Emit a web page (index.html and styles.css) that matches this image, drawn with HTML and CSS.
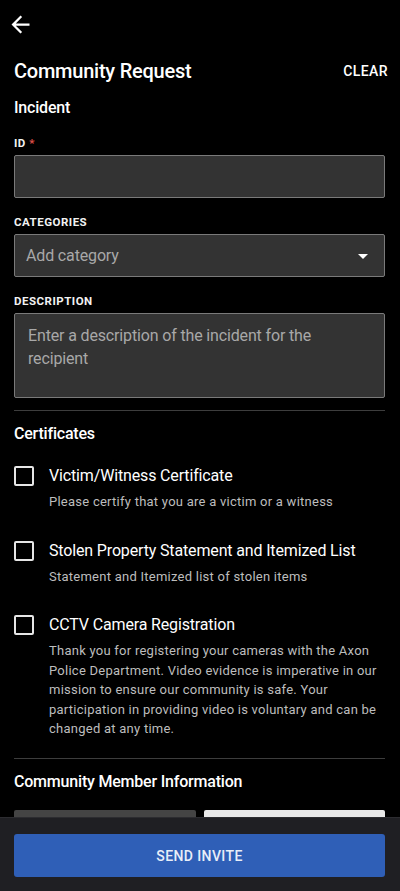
FILE: index.html
```html
<!DOCTYPE html>
<html lang="en">
<head>
<meta charset="utf-8">
<title>Community Request</title>
<link rel="stylesheet" href="styles.css">
</head>
<body>
<div class="page">
  <header class="topbar">
    <button class="back" aria-label="Back">
      <svg viewBox="0 0 24 24" width="27" height="27"><path fill="#fff" d="M20 11H7.83l5.59-5.59L12 4l-8 8 8 8 1.41-1.41L7.83 13H20v-2z"/></svg>
    </button>
  </header>

  <main class="content">
    <div class="title-row">
      <h1 class="title">Community Request</h1>
      <button class="clear">CLEAR</button>
    </div>

    <h2 class="section">Incident</h2>

    <div class="field">
      <label class="label">ID <span class="req">*</span></label>
      <div class="input"></div>
    </div>

    <div class="field">
      <label class="label">CATEGORIES</label>
      <div class="input select">
        <span class="placeholder">Add category</span>
        <svg class="caret" viewBox="0 0 10 5" width="10" height="5"><path fill="#fff" d="M0 0h10L5 5z"/></svg>
      </div>
    </div>

    <div class="field">
      <label class="label">DESCRIPTION</label>
      <div class="input textarea">
        <span class="placeholder">Enter a description of the incident for the recipient</span>
      </div>
    </div>

    <hr class="divider">

    <h2 class="section">Certificates</h2>

    <ul class="certs">
      <li class="cert">
        <span class="check"></span>
        <div class="cert-body">
          <div class="cert-title">Victim/Witness Certificate</div>
          <div class="cert-desc">Please certify that you are a victim or a witness</div>
        </div>
      </li>
      <li class="cert">
        <span class="check"></span>
        <div class="cert-body">
          <div class="cert-title">Stolen Property Statement and Itemized List</div>
          <div class="cert-desc">Statement and Itemized list of stolen items</div>
        </div>
      </li>
      <li class="cert">
        <span class="check"></span>
        <div class="cert-body">
          <div class="cert-title">CCTV Camera Registration</div>
          <div class="cert-desc">Thank you for registering your cameras with the Axon Police Department. Video evidence is imperative in our mission to ensure our community is safe. Your participation in providing video is voluntary and can be changed at any time.</div>
        </div>
      </li>
    </ul>

    <hr class="divider">

    <h2 class="section">Community Member Information</h2>

    <div class="toggle">
      <button class="tog dark"></button>
      <button class="tog light"></button>
    </div>
  </main>

  <footer class="bottombar">
    <button class="send">SEND INVITE</button>
  </footer>
</div>
</body>
</html>
```

FILE: styles.css
```css
* { box-sizing: border-box; }
html, body {
  margin: 0;
  padding: 0;
  background: #000;
  color: #fff;
  font-family: Roboto, "Noto Sans", "Liberation Sans", sans-serif;
}
button { font-family: inherit; border: 0; background: none; color: inherit; padding: 0; }

.topbar {
  height: 48px;
  display: flex;
  align-items: center;
  padding-left: 7px;
  padding-top: 1px;
}
.back { display: flex; width: 27px; height: 27px; }

.content {
  padding: 0 15px 90px 14px;
}

.title-row {
  display: flex;
  align-items: center;
  justify-content: space-between;
  height: 30px;
  margin-top: 8px;
}
.title {
  margin: 0;
  font-size: 20px;
  font-weight: 500;
  line-height: 28px;
  letter-spacing: -0.24px;
}
.clear {
  font-size: 14px;
  font-weight: 500;
  letter-spacing: 0.4px;
  margin-right: -3px;
}

.section {
  margin: 10px 0 0;
  font-size: 16px;
  font-weight: 500;
  line-height: 24px;
  letter-spacing: -0.2px;
}

.field { margin-top: 15px; }
.field + .field { margin-top: 16px; }

.label {
  display: block;
  font-size: 11.5px;
  font-weight: 700;
  line-height: 16px;
  letter-spacing: 0.5px;
  margin-bottom: 4px;
  color: #f2f2f2;
}
.req { color: #e0504a; }

.input {
  height: 43px;
  background: #333;
  border: 1px solid #7a7a7a;
  border-radius: 2px;
}
.select {
  display: flex;
  align-items: center;
  justify-content: space-between;
  padding: 0 16px 0 11px;
}
.placeholder {
  font-size: 16px;
  letter-spacing: -0.15px;
  color: #a8a8a8;
}
.caret { margin-top: 1px; }
.textarea {
  height: 85px;
  padding: 10px 40px 0 13px;
  line-height: 23px;
}

.divider {
  border: 0;
  height: 1px;
  background: #3d3d3d;
  margin: 12px 0 0;
}
.divider + .section { margin-top: 11px; }

.certs {
  list-style: none;
  margin: 18px 0 0;
  padding: 0;
  display: flex;
  flex-direction: column;
  gap: 27px;
}
.cert {
  display: flex;
  gap: 15px;
}
.check {
  flex: none;
  width: 20px;
  height: 20px;
  margin-top: 2px;
  border: 2px solid #e6e6e6;
  border-radius: 2px;
}
.cert-title {
  font-size: 16px;
  line-height: 24px;
  letter-spacing: -0.15px;
  color: #fff;
}
.cert-desc {
  margin-top: 4px;
  font-size: 13px;
  line-height: 19.5px;
  letter-spacing: 0.25px;
  color: #bdbdbd;
}
.certs + .divider { margin-top: 19px; }

.toggle {
  display: flex;
  gap: 8px;
  margin-top: 16px;
}
.tog {
  flex: 1;
  height: 40px;
  border-radius: 2px;
}
.tog.dark { background: #444; }
.tog.light { background: #e8e8e8; }

.bottombar {
  position: fixed;
  left: 0;
  right: 0;
  bottom: 0;
  height: 74px;
  background: #1f1f23;
  border-top: 1px solid #2c2c30;
  padding: 16px 15px 14px 14px;
}
.send {
  width: 100%;
  height: 43px;
  background: #2f5fb7;
  border-radius: 3px;
  font-size: 14px;
  font-weight: 500;
  letter-spacing: 0.4px;
  color: #e8eef8;
}
```
